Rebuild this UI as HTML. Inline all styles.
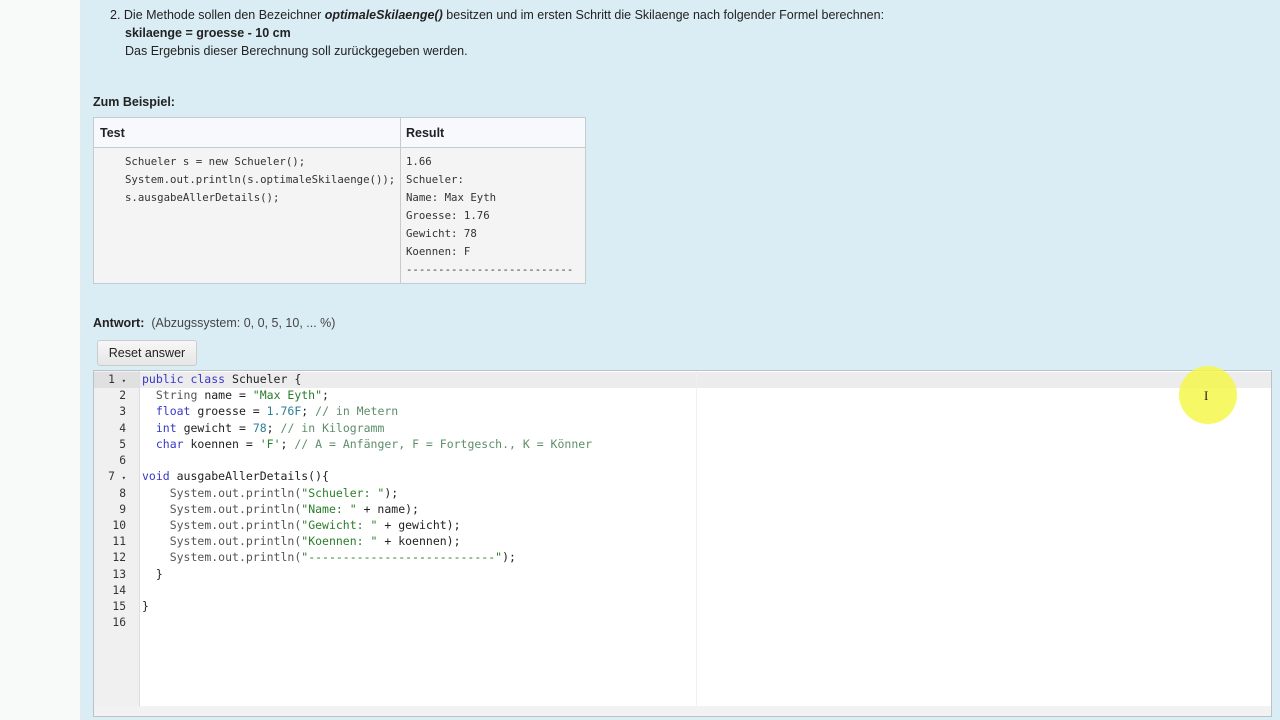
<!DOCTYPE html>
<html><head><meta charset="utf-8"><style>
body{margin:0;width:1280px;height:720px;overflow:hidden;background:#f8f9f9;font-family:"Liberation Sans",sans-serif;font-size:12.5px;color:#222;position:relative}
.main{position:absolute;left:80px;top:0;width:1200px;height:720px;background:#dbedf4;border-left:1px solid #e4eaec}
.a{position:absolute}
.mono{font-family:"DejaVu Sans Mono","Liberation Mono",monospace;font-size:10.7px;color:#333}
.code{position:absolute;left:93px;top:370px;width:1177px;height:345px;background:#fff;border:1px solid #b7c3c8}
.gut{position:absolute;left:0;top:0;width:45px;height:100%;background:#f0f0f0;border-right:1px solid #ddd}
.ln{position:absolute;left:0;width:32px;text-align:right;font-family:"DejaVu Sans Mono",monospace;font-size:11.3px;color:#333}
.cl{position:absolute;left:48px;font-family:"DejaVu Sans Mono",monospace;font-size:11.5px;color:#222;white-space:pre}
.k{color:#3737c8}.s{color:#2a7d2a}.c{color:#5f8d6a}.n{color:#2f7e9a}.g{color:#555}
</style></head><body>
<div class="main"></div>
<div class="a" style="left:110px;top:8px">2. Die Methode sollen den Bezeichner <b><i>optimaleSkilaenge()</i></b> besitzen und im ersten Schritt die Skilaenge nach folgender Formel berechnen:</div>
<div class="a" style="left:125px;top:26px;font-weight:bold">skilaenge = groesse - 10 cm</div>
<div class="a" style="left:125px;top:44px">Das Ergebnis dieser Berechnung soll zurückgegeben werden.</div>
<div class="a" style="left:93px;top:95px;font-weight:bold">Zum Beispiel:</div>
<div class="a" style="left:93px;top:117px;width:491px;height:165px;border:1px solid #c5ccd0;background:#f4f4f4">
 <div class="a" style="left:0;top:0;width:491px;height:29px;background:#f8f9fc;border-bottom:1px solid #c5ccd0"></div>
 <div class="a" style="left:306px;top:0;width:1px;height:165px;background:#c5ccd0"></div>
 <div class="a" style="left:6px;top:8px;font-weight:bold">Test</div>
 <div class="a" style="left:312px;top:8px;font-weight:bold">Result</div>
 <div class="a mono" style="left:31px;top:35px;line-height:18px;white-space:pre">Schueler s = new Schueler();
System.out.println(s.optimaleSkilaenge());
s.ausgabeAllerDetails();</div>
 <div class="a mono" style="left:312px;top:35px;line-height:18px;white-space:pre">1.66
Schueler:
Name: Max Eyth
Groesse: 1.76
Gewicht: 78
Koennen: F
--------------------------</div>
</div>
<div class="a" style="left:93px;top:316px"><b>Antwort:</b>&nbsp; <span style="color:#444">(Abzugssystem: 0, 0, 5, 10, ... %)</span></div>
<div class="a" style="left:97px;top:340px;width:98px;height:24px;background:linear-gradient(#f7f7f7,#e6e6e6);border:1px solid #ccc;border-radius:3px;text-align:center;line-height:24px">Reset answer</div>
<div class="code">
 <div class="a" style="left:0;top:1px;width:1177px;height:16px;background:#ececec"></div>
 <div class="gut"></div>
 <div class="a" style="left:0;top:1px;width:45px;height:16px;background:#e0e0e0"></div>
 <div class="a" style="left:602px;top:0;width:1px;height:100%;background:#f0f0f0"></div>
 <div class="a" style="left:0;bottom:0;width:1177px;height:10px;background:#f2f2f2"></div>
 <div class="ln" style="top:2px">1 <span style="font-size:7px">▾</span></div>
 <div class="ln" style="top:18px">2</div><div class="ln" style="top:34px">3</div><div class="ln" style="top:51px">4</div><div class="ln" style="top:67px">5</div><div class="ln" style="top:83px">6</div>
 <div class="ln" style="top:99px">7 <span style="font-size:7px">▾</span></div>
 <div class="ln" style="top:116px">8</div><div class="ln" style="top:132px">9</div><div class="ln" style="top:148px">10</div><div class="ln" style="top:164px">11</div><div class="ln" style="top:180px">12</div><div class="ln" style="top:197px">13</div><div class="ln" style="top:213px">14</div><div class="ln" style="top:229px">15</div><div class="ln" style="top:245px">16</div>
 <div class="cl" style="top:1px"><span class="k">public class</span> Schueler {</div>
 <div class="cl" style="top:17px">  <span class="g">String</span> name = <span class="s">"Max Eyth"</span>;</div>
 <div class="cl" style="top:33px">  <span class="k">float</span> groesse = <span class="n">1.76F</span>; <span class="c">// in Metern</span></div>
 <div class="cl" style="top:50px">  <span class="k">int</span> gewicht = <span class="n">78</span>; <span class="c">// in Kilogramm</span></div>
 <div class="cl" style="top:66px">  <span class="k">char</span> koennen = <span class="s">'F'</span>; <span class="c">// A = Anfänger, F = Fortgesch., K = Könner</span></div>
 <div class="cl" style="top:98px"><span class="k">void</span> ausgabeAllerDetails(){</div>
 <div class="cl" style="top:115px">    <span class="g">System.out.println(</span><span class="s">"Schueler: "</span>);</div>
 <div class="cl" style="top:131px">    <span class="g">System.out.println(</span><span class="s">"Name: "</span> + name);</div>
 <div class="cl" style="top:147px">    <span class="g">System.out.println(</span><span class="s">"Gewicht: "</span> + gewicht);</div>
 <div class="cl" style="top:163px">    <span class="g">System.out.println(</span><span class="s">"Koennen: "</span> + koennen);</div>
 <div class="cl" style="top:179px">    <span class="g">System.out.println(</span><span class="s">"---------------------------"</span>);</div>
 <div class="cl" style="top:196px">  }</div>
 <div class="cl" style="top:228px">}</div>
</div>
<div class="a" style="left:1179px;top:366px;width:58px;height:58px;border-radius:50%;background:#f6f74a;opacity:.85"></div>
<div class="a" style="left:1204px;top:388px;font-size:13px;font-family:'Liberation Serif',serif">I</div>
</body></html>
